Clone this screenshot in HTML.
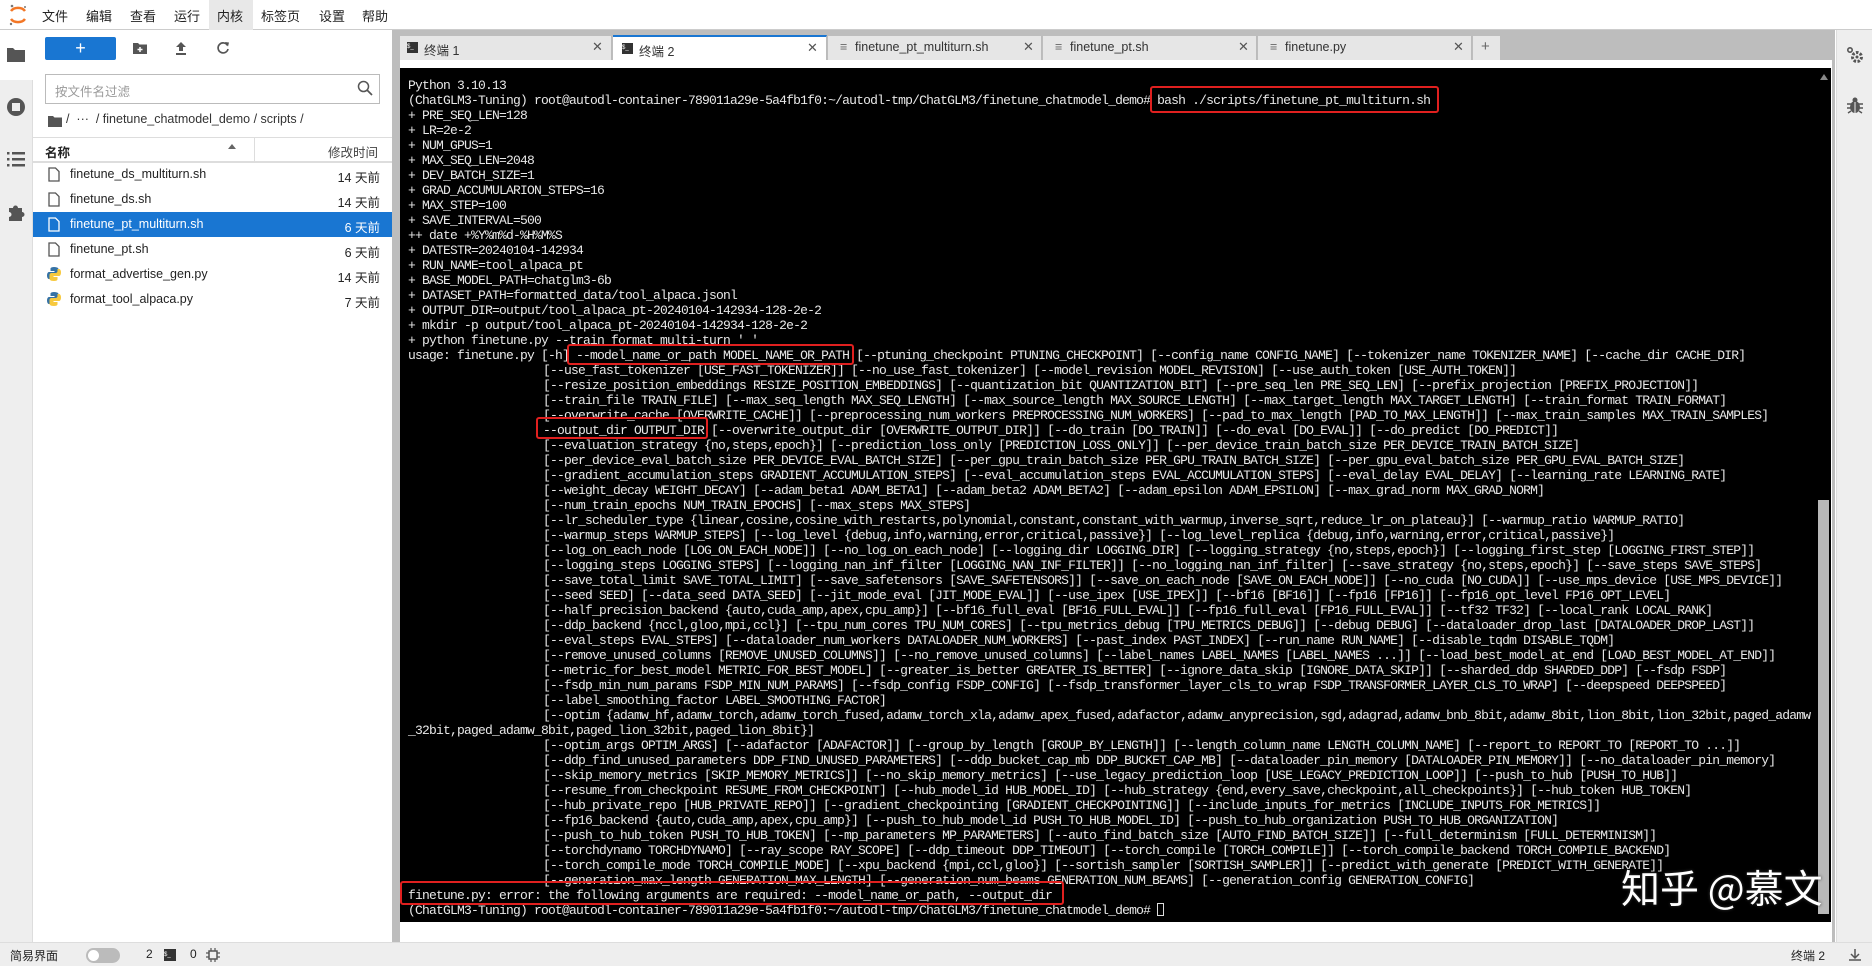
<!DOCTYPE html>
<html><head><meta charset="utf-8">
<style>
*{margin:0;padding:0;box-sizing:border-box}
html,body{width:1872px;height:966px;overflow:hidden;background:#fff;font-family:"Liberation Sans","Noto Sans CJK SC",sans-serif;font-size:13px;color:#222}
.abs{position:absolute}
#menu{left:0;top:0;width:1872px;height:30px;background:#fff;border-bottom:1px solid #ccc}
#menu span{position:absolute;top:6px;font-size:13px;color:#222}
#rail{left:0;top:30px;width:33px;height:912px;background:#eeeeee;border-right:1px solid #ddd}
#files{left:33px;top:30px;width:359px;height:912px;background:#fff}
#gap{left:392px;top:30px;width:1443px;height:912px;background:#bdbdbd}
#rbar{left:1836px;top:30px;width:36px;height:912px;background:#eeeeee;border-left:1px solid #ddd}
.tab{position:absolute;top:36px;height:24px;background:#e6e6e6;border-right:1px solid #bbb;font-size:12.5px;color:#333}
.tab .t{position:absolute;top:4px}
.tab .x{position:absolute;top:3px;font-size:13px;color:#555}
#term{left:400px;top:60px;width:1432px;height:882px;background:#fff}
#black{left:400px;top:68px;width:1431px;height:854px;background:#000;overflow:hidden}
#txt{position:absolute;left:8px;top:10px;font-family:"Liberation Mono",monospace;font-size:13px;letter-spacing:-0.8px;line-height:15px;color:#e8e8e8;white-space:pre}
.ind{padding-left:135px}
.red{position:absolute;border:2px solid #e0201f;border-radius:3px}
.row{position:absolute;left:33px;width:359px;height:25px;font-size:12.5px}
.row .n{position:absolute;left:37px;top:5px}
.row .d{position:absolute;right:12px;top:5px}
#status{left:0;top:942px;width:1872px;height:24px;background:#eeeeee;border-top:1px solid #ddd;font-size:12px}
</style></head><body>

<div id="menu" class="abs">
  <svg class="abs" style="left:6px;top:3px" width="24" height="24" viewBox="0 0 24 24"><path d="M5 8 A8 6 0 0 1 19 8" fill="none" stroke="#f37726" stroke-width="2.5"/><path d="M5 16 A8 6 0 0 0 19 16" fill="none" stroke="#f37726" stroke-width="2.5"/><circle cx="6" cy="3" r="1.3" fill="#777"/><circle cx="19" cy="4" r="1" fill="#777"/><circle cx="5" cy="21" r="1.2" fill="#777"/></svg>
  <span style="left:42px">文件</span><span style="left:86px">编辑</span><span style="left:130px">查看</span><span style="left:174px">运行</span>
  <div class="abs" style="left:209px;top:0;width:44px;height:30px;background:#e8e8e8"></div><span style="left:217px">内核</span>
  <span style="left:261px">标签页</span><span style="left:319px">设置</span><span style="left:362px">帮助</span>
</div>

<div id="rail" class="abs"></div>
<div class="abs" style="left:0;top:30px;width:33px;height:50px;background:#fff"></div>
<svg class="abs" style="left:7px;top:46px" width="18" height="16" viewBox="0 0 18 16"><path d="M0 2h6l2 2h10v12H0z" fill="#555"/></svg>
<svg class="abs" style="left:6px;top:97px" width="20" height="20" viewBox="0 0 20 20"><circle cx="10" cy="10" r="9" fill="#555"/><rect x="6" y="6" width="8" height="8" fill="#eee"/></svg>
<svg class="abs" style="left:7px;top:151px" width="18" height="16" viewBox="0 0 18 16"><g fill="#555"><rect x="0" y="1" width="2.5" height="2.5"/><rect x="5" y="1" width="13" height="2.5"/><rect x="0" y="7" width="2.5" height="2.5"/><rect x="5" y="7" width="13" height="2.5"/><rect x="0" y="13" width="2.5" height="2.5"/><rect x="5" y="13" width="13" height="2.5"/></g></svg>
<svg class="abs" style="left:6px;top:202px" width="20" height="20" viewBox="0 0 20 20"><path d="M3 6h4a2.5 2.5 0 1 1 5 0h4v4a2.5 2.5 0 1 1 0 5v4H3v-4a2.5 2.5 0 1 0 0-5z" fill="#555"/></svg>

<div id="files" class="abs"></div>
<div class="abs" style="left:45px;top:37px;width:71px;height:23px;background:#1976d2;border-radius:2px;color:#fff;font-size:18px;text-align:center;line-height:22px">+</div>
<svg class="abs" style="left:133px;top:42px" width="14" height="12" viewBox="0 0 14 12"><path d="M0 1h5l1.5 1.5H14V12H0z" fill="#555"/><path d="M7 5v5M4.5 7.5h5" stroke="#fff" stroke-width="1.5"/></svg>
<svg class="abs" style="left:175px;top:41px" width="12" height="14" viewBox="0 0 12 14"><path d="M6 1L1 6h3v4h4V6h3z M1 12h10v2H1z" fill="#555"/></svg>
<svg class="abs" style="left:216px;top:41px" width="14" height="14" viewBox="0 0 14 14"><path d="M11.5 4.5A5 5 0 1 0 12 8" fill="none" stroke="#555" stroke-width="1.7"/><path d="M9 1l4 0.5-1 4z" fill="#555"/></svg>
<div class="abs" style="left:45px;top:74px;width:335px;height:30px;border:1px solid #bbb;background:#fff"></div>
<div class="abs" style="left:55px;top:81px;color:#999;font-size:12.5px">按文件名过滤</div>
<svg class="abs" style="left:357px;top:80px" width="16" height="16" viewBox="0 0 16 16"><circle cx="6.5" cy="6.5" r="5" fill="none" stroke="#555" stroke-width="1.5"/><path d="M10 10l5 5" stroke="#555" stroke-width="1.7"/></svg>
<svg class="abs" style="left:48px;top:115px" width="14" height="12" viewBox="0 0 14 12"><path d="M0 1h5l1.5 1.5H14V12H0z" fill="#555"/></svg>
<div class="abs" style="left:66px;top:112px;font-size:12.5px;color:#333">/ &nbsp;··· &nbsp;/ finetune_chatmodel_demo / scripts /</div>
<div class="abs" style="left:33px;top:137px;width:359px;height:1px;background:#ddd"></div>
<div class="abs" style="left:33px;top:161px;width:359px;height:2px;background:#ddd"></div>
<div class="abs" style="left:254px;top:138px;width:1px;height:23px;background:#ddd"></div>
<div class="abs" style="left:45px;top:142px;font-size:12.5px;font-weight:bold">名称</div>
<div class="abs" style="left:228px;top:144px;width:0;height:0;border-left:4px solid transparent;border-right:4px solid transparent;border-bottom:5px solid #666"></div>
<div class="abs" style="left:328px;top:142px;font-size:12.5px;color:#444">修改时间</div>

<div class="row" style="top:162px"><svg class="abs" style="left:15px;top:5px" width="12" height="15" viewBox="0 0 12 15"><path d="M1 1h6.5L11 4.5V14H1z" fill="none" stroke="#555" stroke-width="1.3"/></svg><span class="n">finetune_ds_multiturn.sh</span><span class="d">14 天前</span></div>
<div class="row" style="top:187px"><svg class="abs" style="left:15px;top:5px" width="12" height="15" viewBox="0 0 12 15"><path d="M1 1h6.5L11 4.5V14H1z" fill="none" stroke="#555" stroke-width="1.3"/></svg><span class="n">finetune_ds.sh</span><span class="d">14 天前</span></div>
<div class="row" style="top:212px;background:#1976d2;color:#fff"><svg class="abs" style="left:15px;top:5px" width="12" height="15" viewBox="0 0 12 15"><path d="M1 1h6.5L11 4.5V14H1z" fill="none" stroke="#fff" stroke-width="1.3"/></svg><span class="n">finetune_pt_multiturn.sh</span><span class="d">6 天前</span></div>
<div class="row" style="top:237px"><svg class="abs" style="left:15px;top:5px" width="12" height="15" viewBox="0 0 12 15"><path d="M1 1h6.5L11 4.5V14H1z" fill="none" stroke="#555" stroke-width="1.3"/></svg><span class="n">finetune_pt.sh</span><span class="d">6 天前</span></div>
<div class="row" style="top:262px"><svg class="abs" style="left:14px;top:5px" width="14" height="14" viewBox="0 0 14 14"><path d="M7 0C3 0 3.5 2 3.5 2v2h4v1H2S0 5 0 8.5 2 12 2 12h1.5v-2s0-2 2-2h4s2 0 2-2V2S11.5 0 7 0z" fill="#3572a5"/><path d="M7 14c4 0 3.5-2 3.5-2v-2h-4V9H12s2 0 2-3.5S12 2 12 2h-1.5v2s0 2-2 2h-4s-2 0-2 2v4S2.5 14 7 14z" fill="#f7c93e"/></svg><span class="n">format_advertise_gen.py</span><span class="d">14 天前</span></div>
<div class="row" style="top:287px"><svg class="abs" style="left:14px;top:5px" width="14" height="14" viewBox="0 0 14 14"><path d="M7 0C3 0 3.5 2 3.5 2v2h4v1H2S0 5 0 8.5 2 12 2 12h1.5v-2s0-2 2-2h4s2 0 2-2V2S11.5 0 7 0z" fill="#3572a5"/><path d="M7 14c4 0 3.5-2 3.5-2v-2h-4V9H12s2 0 2-3.5S12 2 12 2h-1.5v2s0 2-2 2h-4s-2 0-2 2v4S2.5 14 7 14z" fill="#f7c93e"/></svg><span class="n">format_tool_alpaca.py</span><span class="d">7 天前</span></div>

<div id="gap" class="abs"></div>
<div id="rbar" class="abs"></div>
<svg class="abs" style="left:1846px;top:46px" width="18" height="18" viewBox="0 0 18 18"><circle cx="11" cy="11" r="4.5" fill="none" stroke="#555" stroke-width="3" stroke-dasharray="2.5 1.5"/><circle cx="11" cy="11" r="1.5" fill="#555"/><circle cx="4" cy="4" r="2.2" fill="none" stroke="#555" stroke-width="1.6"/></svg>
<svg class="abs" style="left:1847px;top:96px" width="16" height="18" viewBox="0 0 16 18"><ellipse cx="8" cy="11" rx="5" ry="6" fill="#555"/><circle cx="8" cy="4" r="2.5" fill="#555"/><path d="M0 8h16M0 12h16M1 17l3-2M15 17l-3-2" stroke="#555" stroke-width="1.4"/><path d="M8 6v11" stroke="#eee" stroke-width="1"/></svg>

<div class="tab" style="left:400px;width:212px"><span class="abs" style="left:7px;top:6px;width:11px;height:11px;background:#333;color:#fff;font-size:6px;line-height:11px">$_</span><span class="t" style="left:24px">终端 1</span><span class="x" style="left:192px">✕</span></div>
<div class="tab" style="left:613px;width:214px;background:#fff;border-top:2px solid #1976d2;top:35px;height:26px"><span class="abs" style="left:9px;top:6px;width:11px;height:11px;background:#333;color:#fff;font-size:6px;line-height:11px">$_</span><span class="t" style="left:26px">终端 2</span><span class="x" style="left:194px">✕</span></div>
<div class="tab" style="left:828px;width:214px"><span class="t" style="left:12px;color:#666">≡</span><span class="t" style="left:27px">finetune_pt_multiturn.sh</span><span class="x" style="left:195px">✕</span></div>
<div class="tab" style="left:1043px;width:214px"><span class="t" style="left:12px;color:#666">≡</span><span class="t" style="left:27px">finetune_pt.sh</span><span class="x" style="left:195px">✕</span></div>
<div class="tab" style="left:1258px;width:214px"><span class="t" style="left:12px;color:#666">≡</span><span class="t" style="left:27px">finetune.py</span><span class="x" style="left:195px">✕</span></div>
<div class="tab" style="left:1473px;width:27px;border-right:none"><span class="t" style="left:8px;font-size:15px;top:2px;color:#666">+</span></div>

<div id="term" class="abs"></div>
<div id="black" class="abs">
<div id="txt"><div>Python 3.10.13</div><div>(ChatGLM3-Tuning) root@autodl-container-789011a29e-5a4fb1f0:~/autodl-tmp/ChatGLM3/finetune_chatmodel_demo# bash ./scripts/finetune_pt_multiturn.sh</div><div>+ PRE_SEQ_LEN=128</div><div>+ LR=2e-2</div><div>+ NUM_GPUS=1</div><div>+ MAX_SEQ_LEN=2048</div><div>+ DEV_BATCH_SIZE=1</div><div>+ GRAD_ACCUMULARION_STEPS=16</div><div>+ MAX_STEP=100</div><div>+ SAVE_INTERVAL=500</div><div>++ date +%Y%m%d-%H%M%S</div><div>+ DATESTR=20240104-142934</div><div>+ RUN_NAME=tool_alpaca_pt</div><div>+ BASE_MODEL_PATH=chatglm3-6b</div><div>+ DATASET_PATH=formatted_data/tool_alpaca.jsonl</div><div>+ OUTPUT_DIR=output/tool_alpaca_pt-20240104-142934-128-2e-2</div><div>+ mkdir -p output/tool_alpaca_pt-20240104-142934-128-2e-2</div><div>+ python finetune.py --train_format multi-turn ' '</div><div>usage: finetune.py [-h] --model_name_or_path MODEL_NAME_OR_PATH [--ptuning_checkpoint PTUNING_CHECKPOINT] [--config_name CONFIG_NAME] [--tokenizer_name TOKENIZER_NAME] [--cache_dir CACHE_DIR]</div><div class="ind">[--use_fast_tokenizer [USE_FAST_TOKENIZER]] [--no_use_fast_tokenizer] [--model_revision MODEL_REVISION] [--use_auth_token [USE_AUTH_TOKEN]]</div><div class="ind">[--resize_position_embeddings RESIZE_POSITION_EMBEDDINGS] [--quantization_bit QUANTIZATION_BIT] [--pre_seq_len PRE_SEQ_LEN] [--prefix_projection [PREFIX_PROJECTION]]</div><div class="ind">[--train_file TRAIN_FILE] [--max_seq_length MAX_SEQ_LENGTH] [--max_source_length MAX_SOURCE_LENGTH] [--max_target_length MAX_TARGET_LENGTH] [--train_format TRAIN_FORMAT]</div><div class="ind">[--overwrite_cache [OVERWRITE_CACHE]] [--preprocessing_num_workers PREPROCESSING_NUM_WORKERS] [--pad_to_max_length [PAD_TO_MAX_LENGTH]] [--max_train_samples MAX_TRAIN_SAMPLES]</div><div class="ind">--output_dir OUTPUT_DIR [--overwrite_output_dir [OVERWRITE_OUTPUT_DIR]] [--do_train [DO_TRAIN]] [--do_eval [DO_EVAL]] [--do_predict [DO_PREDICT]]</div><div class="ind">[--evaluation_strategy {no,steps,epoch}] [--prediction_loss_only [PREDICTION_LOSS_ONLY]] [--per_device_train_batch_size PER_DEVICE_TRAIN_BATCH_SIZE]</div><div class="ind">[--per_device_eval_batch_size PER_DEVICE_EVAL_BATCH_SIZE] [--per_gpu_train_batch_size PER_GPU_TRAIN_BATCH_SIZE] [--per_gpu_eval_batch_size PER_GPU_EVAL_BATCH_SIZE]</div><div class="ind">[--gradient_accumulation_steps GRADIENT_ACCUMULATION_STEPS] [--eval_accumulation_steps EVAL_ACCUMULATION_STEPS] [--eval_delay EVAL_DELAY] [--learning_rate LEARNING_RATE]</div><div class="ind">[--weight_decay WEIGHT_DECAY] [--adam_beta1 ADAM_BETA1] [--adam_beta2 ADAM_BETA2] [--adam_epsilon ADAM_EPSILON] [--max_grad_norm MAX_GRAD_NORM]</div><div class="ind">[--num_train_epochs NUM_TRAIN_EPOCHS] [--max_steps MAX_STEPS]</div><div class="ind">[--lr_scheduler_type {linear,cosine,cosine_with_restarts,polynomial,constant,constant_with_warmup,inverse_sqrt,reduce_lr_on_plateau}] [--warmup_ratio WARMUP_RATIO]</div><div class="ind">[--warmup_steps WARMUP_STEPS] [--log_level {debug,info,warning,error,critical,passive}] [--log_level_replica {debug,info,warning,error,critical,passive}]</div><div class="ind">[--log_on_each_node [LOG_ON_EACH_NODE]] [--no_log_on_each_node] [--logging_dir LOGGING_DIR] [--logging_strategy {no,steps,epoch}] [--logging_first_step [LOGGING_FIRST_STEP]]</div><div class="ind">[--logging_steps LOGGING_STEPS] [--logging_nan_inf_filter [LOGGING_NAN_INF_FILTER]] [--no_logging_nan_inf_filter] [--save_strategy {no,steps,epoch}] [--save_steps SAVE_STEPS]</div><div class="ind">[--save_total_limit SAVE_TOTAL_LIMIT] [--save_safetensors [SAVE_SAFETENSORS]] [--save_on_each_node [SAVE_ON_EACH_NODE]] [--no_cuda [NO_CUDA]] [--use_mps_device [USE_MPS_DEVICE]]</div><div class="ind">[--seed SEED] [--data_seed DATA_SEED] [--jit_mode_eval [JIT_MODE_EVAL]] [--use_ipex [USE_IPEX]] [--bf16 [BF16]] [--fp16 [FP16]] [--fp16_opt_level FP16_OPT_LEVEL]</div><div class="ind">[--half_precision_backend {auto,cuda_amp,apex,cpu_amp}] [--bf16_full_eval [BF16_FULL_EVAL]] [--fp16_full_eval [FP16_FULL_EVAL]] [--tf32 TF32] [--local_rank LOCAL_RANK]</div><div class="ind">[--ddp_backend {nccl,gloo,mpi,ccl}] [--tpu_num_cores TPU_NUM_CORES] [--tpu_metrics_debug [TPU_METRICS_DEBUG]] [--debug DEBUG] [--dataloader_drop_last [DATALOADER_DROP_LAST]]</div><div class="ind">[--eval_steps EVAL_STEPS] [--dataloader_num_workers DATALOADER_NUM_WORKERS] [--past_index PAST_INDEX] [--run_name RUN_NAME] [--disable_tqdm DISABLE_TQDM]</div><div class="ind">[--remove_unused_columns [REMOVE_UNUSED_COLUMNS]] [--no_remove_unused_columns] [--label_names LABEL_NAMES [LABEL_NAMES ...]] [--load_best_model_at_end [LOAD_BEST_MODEL_AT_END]]</div><div class="ind">[--metric_for_best_model METRIC_FOR_BEST_MODEL] [--greater_is_better GREATER_IS_BETTER] [--ignore_data_skip [IGNORE_DATA_SKIP]] [--sharded_ddp SHARDED_DDP] [--fsdp FSDP]</div><div class="ind">[--fsdp_min_num_params FSDP_MIN_NUM_PARAMS] [--fsdp_config FSDP_CONFIG] [--fsdp_transformer_layer_cls_to_wrap FSDP_TRANSFORMER_LAYER_CLS_TO_WRAP] [--deepspeed DEEPSPEED]</div><div class="ind">[--label_smoothing_factor LABEL_SMOOTHING_FACTOR]</div><div class="ind">[--optim {adamw_hf,adamw_torch,adamw_torch_fused,adamw_torch_xla,adamw_apex_fused,adafactor,adamw_anyprecision,sgd,adagrad,adamw_bnb_8bit,adamw_8bit,lion_8bit,lion_32bit,paged_adamw</div><div>_32bit,paged_adamw_8bit,paged_lion_32bit,paged_lion_8bit}]</div><div class="ind">[--optim_args OPTIM_ARGS] [--adafactor [ADAFACTOR]] [--group_by_length [GROUP_BY_LENGTH]] [--length_column_name LENGTH_COLUMN_NAME] [--report_to REPORT_TO [REPORT_TO ...]]</div><div class="ind">[--ddp_find_unused_parameters DDP_FIND_UNUSED_PARAMETERS] [--ddp_bucket_cap_mb DDP_BUCKET_CAP_MB] [--dataloader_pin_memory [DATALOADER_PIN_MEMORY]] [--no_dataloader_pin_memory]</div><div class="ind">[--skip_memory_metrics [SKIP_MEMORY_METRICS]] [--no_skip_memory_metrics] [--use_legacy_prediction_loop [USE_LEGACY_PREDICTION_LOOP]] [--push_to_hub [PUSH_TO_HUB]]</div><div class="ind">[--resume_from_checkpoint RESUME_FROM_CHECKPOINT] [--hub_model_id HUB_MODEL_ID] [--hub_strategy {end,every_save,checkpoint,all_checkpoints}] [--hub_token HUB_TOKEN]</div><div class="ind">[--hub_private_repo [HUB_PRIVATE_REPO]] [--gradient_checkpointing [GRADIENT_CHECKPOINTING]] [--include_inputs_for_metrics [INCLUDE_INPUTS_FOR_METRICS]]</div><div class="ind">[--fp16_backend {auto,cuda_amp,apex,cpu_amp}] [--push_to_hub_model_id PUSH_TO_HUB_MODEL_ID] [--push_to_hub_organization PUSH_TO_HUB_ORGANIZATION]</div><div class="ind">[--push_to_hub_token PUSH_TO_HUB_TOKEN] [--mp_parameters MP_PARAMETERS] [--auto_find_batch_size [AUTO_FIND_BATCH_SIZE]] [--full_determinism [FULL_DETERMINISM]]</div><div class="ind">[--torchdynamo TORCHDYNAMO] [--ray_scope RAY_SCOPE] [--ddp_timeout DDP_TIMEOUT] [--torch_compile [TORCH_COMPILE]] [--torch_compile_backend TORCH_COMPILE_BACKEND]</div><div class="ind">[--torch_compile_mode TORCH_COMPILE_MODE] [--xpu_backend {mpi,ccl,gloo}] [--sortish_sampler [SORTISH_SAMPLER]] [--predict_with_generate [PREDICT_WITH_GENERATE]]</div><div class="ind">[--generation_max_length GENERATION_MAX_LENGTH] [--generation_num_beams GENERATION_NUM_BEAMS] [--generation_config GENERATION_CONFIG]</div><div>finetune.py: error: the following arguments are required: --model_name_or_path, --output_dir</div><div>(ChatGLM3-Tuning) root@autodl-container-789011a29e-5a4fb1f0:~/autodl-tmp/ChatGLM3/finetune_chatmodel_demo# <span style="display:inline-block;width:7px;height:13px;border:1px solid #ddd;vertical-align:-2px"></span></div></div>
</div>
<div class="abs" style="left:1817px;top:68px;width:14px;height:854px;background:#000"></div>
<div class="abs" style="left:1820px;top:74px;width:0;height:0;border-left:4px solid transparent;border-right:4px solid transparent;border-bottom:6px solid #888"></div>
<div class="abs" style="left:1818px;top:500px;width:11px;height:414px;background:#b8b8b8"></div>

<div class="red" style="left:1150px;top:86px;width:289px;height:27px"></div>
<div class="red" style="left:567px;top:344px;width:287px;height:21px"></div>
<div class="red" style="left:536px;top:417px;width:172px;height:22px"></div>
<div class="red" style="left:400px;top:881px;width:664px;height:24px"></div>

<div class="abs" style="left:1621px;top:862px;font-size:39px;color:#fff;font-family:'Noto Sans CJK SC',sans-serif;text-shadow:0 0 3px #333;white-space:nowrap;line-height:50px">知乎 @慕文</div>

<div id="status" class="abs">
  <span class="abs" style="left:10px;top:4px">简易界面</span>
  <span class="abs" style="left:86px;top:5px;width:34px;height:15px;background:#bbb;border-radius:8px"></span>
  <span class="abs" style="left:88px;top:7px;width:11px;height:11px;background:#fff;border-radius:6px"></span>
  <span class="abs" style="left:146px;top:4px">2</span>
  <span class="abs" style="left:164px;top:6px;width:12px;height:12px;background:#333;color:#fff;font-size:6px;line-height:12px">$_</span>
  <span class="abs" style="left:190px;top:4px">0</span>
  <svg class="abs" style="left:206px;top:5px" width="14" height="14" viewBox="0 0 14 14"><rect x="3" y="3" width="8" height="8" fill="none" stroke="#555" stroke-width="1.5"/><path d="M5 0v3M9 0v3M5 11v3M9 11v3M0 5h3M0 9h3M11 5h3M11 9h3" stroke="#555" stroke-width="1.2"/></svg>
  <span class="abs" style="left:1791px;top:4px">终端 2</span>
  <svg class="abs" style="left:1848px;top:5px" width="14" height="14" viewBox="0 0 14 14"><path d="M7 1v8M3 6l4 4 4-4M1 12h12" fill="none" stroke="#555" stroke-width="1.5"/></svg>
</div>
</body></html>
